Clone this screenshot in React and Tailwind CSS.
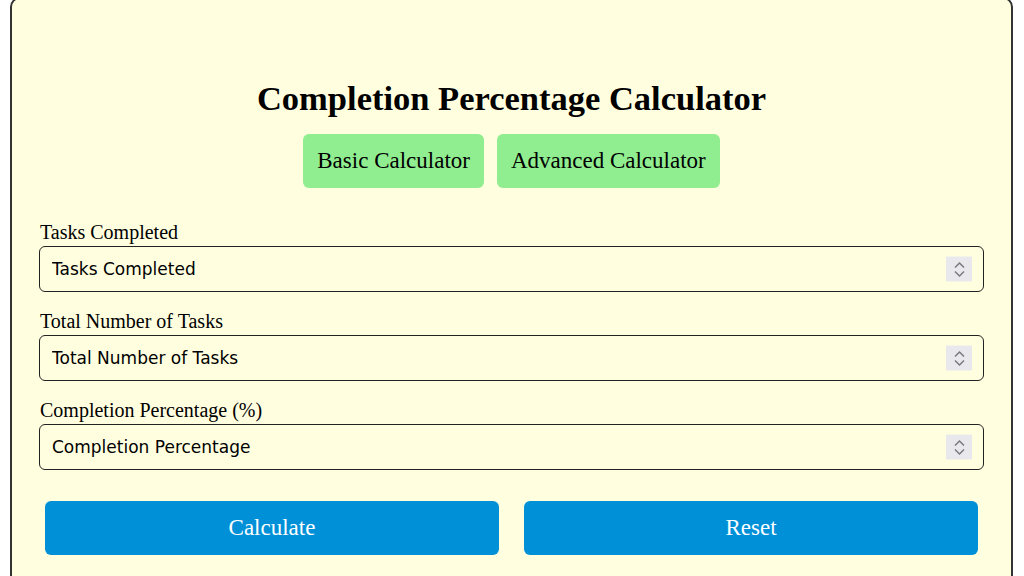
import React, { useState } from 'react'

const fields = [
  { name: 'completed', label: 'Tasks Completed', placeholder: 'Tasks Completed' },
  { name: 'total', label: 'Total Number of Tasks', placeholder: 'Total Number of Tasks' },
  { name: 'percent', label: 'Completion Percentage (%)', placeholder: 'Completion Percentage' },
]

function Spinner() {
  return (
    <div className="absolute right-[12px] top-1/2 -translate-y-1/2 w-[26px] h-[25px] bg-[#e9e9ed] flex flex-col items-center justify-center gap-[2px]">
      <svg width="13" height="8" viewBox="0 0 13 8" fill="none" stroke="#7a7a7a" strokeWidth="1.5">
        <path d="M2 7 L6.5 2.5 L11 7" />
      </svg>
      <svg width="13" height="8" viewBox="0 0 13 8" fill="none" stroke="#7a7a7a" strokeWidth="1.5">
        <path d="M2 1 L6.5 5.5 L11 1" />
      </svg>
    </div>
  )
}

export default function App() {
  const [values, setValues] = useState({ completed: '', total: '', percent: '' })

  function handleChange(e) {
    setValues({ ...values, [e.target.name]: e.target.value })
  }

  function calculate() {
    const done = parseFloat(values.completed)
    const total = parseFloat(values.total)
    if (!isNaN(done) && total > 0) {
      setValues({ ...values, percent: ((done / total) * 100).toFixed(2) })
    }
  }

  return (
    <div className="min-h-[576px] bg-white overflow-hidden">
      <div className="ml-[10px] mr-[11px] -mt-[3px] border-2 border-[#333] rounded-[10px] bg-[#ffffe0] px-[27px] pt-[79px] pb-[40px]">
        <h1 className="text-center font-bold text-[34.5px] leading-[40px] text-black" style={{ fontFamily: '"Liberation Serif", serif' }}>
          Completion Percentage Calculator
        </h1>

        <div className="flex justify-center gap-[13px] mt-[16px]" style={{ fontFamily: '"Liberation Serif", serif' }}>
          <button className="h-[54px] px-[14px] rounded-[6px] bg-[#90ee90] text-[23px] text-black">Basic Calculator</button>
          <button className="h-[54px] px-[14px] rounded-[6px] bg-[#90ee90] text-[23px] text-black">Advanced Calculator</button>
        </div>

        <div className="mt-[32px] flex flex-col gap-[17px]">
          {fields.map((f) => (
            <div key={f.name} className="flex flex-col gap-[2px]">
              <label className="pl-[1px] text-[20px] leading-[24px] text-black" style={{ fontFamily: '"Liberation Serif", serif' }}>
                {f.label}
              </label>
              <div className="relative">
                <input
                  name={f.name}
                  value={values[f.name]}
                  onChange={handleChange}
                  placeholder={f.placeholder}
                  className="w-full h-[46px] border border-[#222] rounded-[6px] bg-transparent pl-[12px] text-[17px] text-black placeholder:text-black outline-none"
                  style={{ fontFamily: '"DejaVu Sans", sans-serif' }}
                />
                <Spinner />
              </div>
            </div>
          ))}
        </div>

        <div className="mt-[31px] flex gap-[25px] px-[6px]" style={{ fontFamily: '"Liberation Serif", serif' }}>
          <button onClick={calculate} className="flex-1 h-[54px] rounded-[6px] bg-[#0090d8] text-white text-[23px]">Calculate</button>
          <button onClick={() => setValues({ completed: '', total: '', percent: '' })} className="flex-1 h-[54px] rounded-[6px] bg-[#0090d8] text-white text-[23px]">Reset</button>
        </div>
      </div>
    </div>
  )
}
